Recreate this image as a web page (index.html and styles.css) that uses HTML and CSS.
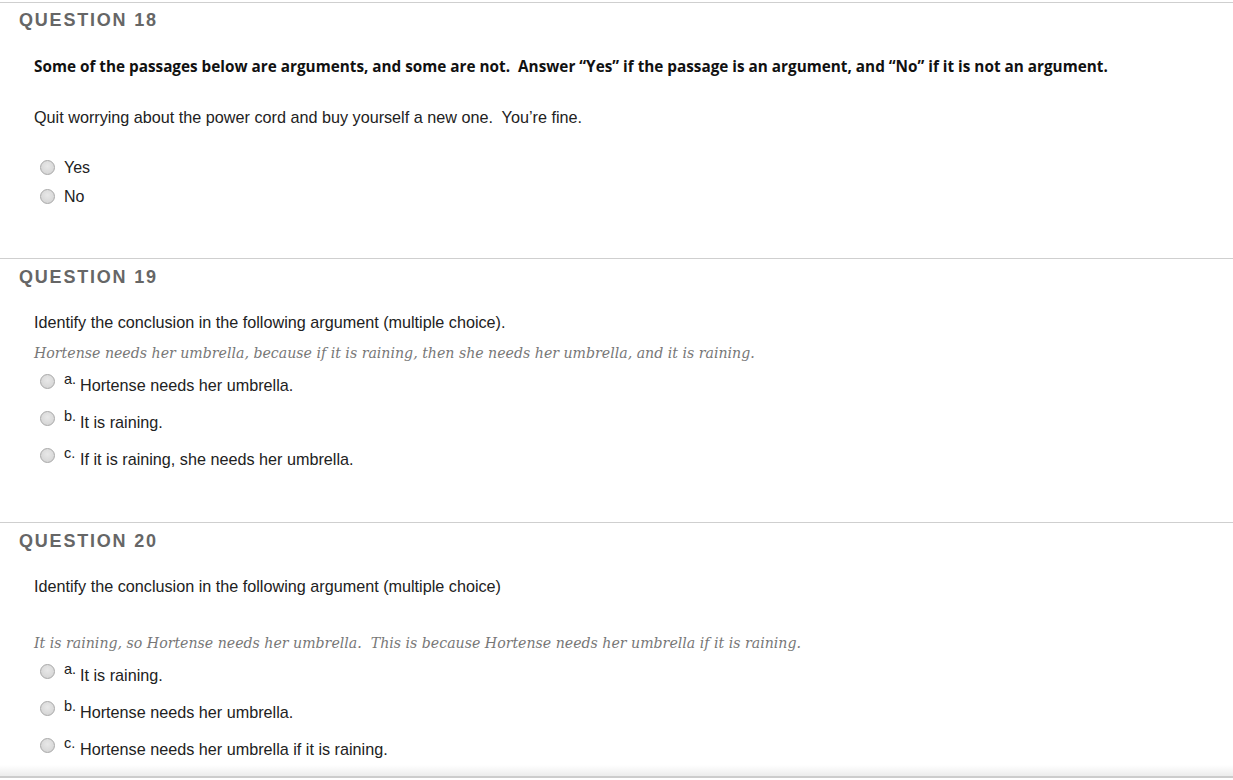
FILE: index.html
```html
<!DOCTYPE html>
<html>
<head>
<meta charset="utf-8">
<link rel="stylesheet" href="styles.css">
</head>
<body>
<div class="page">
  <section class="question q18">
    <h2 class="qtitle">QUESTION 18</h2>
    <p class="instr">Some of the passages below are arguments, and some are not.&nbsp; Answer “Yes” if the passage is an argument, and “No” if it is not an argument.</p>
    <p class="body-text passage">Quit worrying about the power cord and buy yourself a new one.&nbsp; You’re fine.</p>
    <ul class="tf">
      <li><span class="radio"></span><span class="tf-label">Yes</span></li>
      <li><span class="radio"></span><span class="tf-label">No</span></li>
    </ul>
  </section>
  <section class="question q19">
    <h2 class="qtitle">QUESTION 19</h2>
    <p class="body-text prompt">Identify the conclusion in the following argument (multiple choice).</p>
    <p class="ital">Hortense needs her umbrella, because if it is raining, then she needs her umbrella, and it is raining.</p>
    <ul class="mc">
      <li><span class="radio"></span><span class="letter">a.</span><span class="opt">Hortense needs her umbrella.</span></li>
      <li><span class="radio"></span><span class="letter">b.</span><span class="opt">It is raining.</span></li>
      <li><span class="radio"></span><span class="letter">c.</span><span class="opt">If it is raining, she needs her umbrella.</span></li>
    </ul>
  </section>
  <section class="question q20">
    <h2 class="qtitle">QUESTION 20</h2>
    <p class="body-text prompt2">Identify the conclusion in the following argument (multiple choice)</p>
    <p class="ital ital2">It is raining, so Hortense needs her umbrella.&nbsp; This is because Hortense needs her umbrella if it is raining.</p>
    <ul class="mc">
      <li><span class="radio"></span><span class="letter">a.</span><span class="opt">It is raining.</span></li>
      <li><span class="radio"></span><span class="letter">b.</span><span class="opt">Hortense needs her umbrella.</span></li>
      <li><span class="radio"></span><span class="letter">c.</span><span class="opt">Hortense needs her umbrella if it is raining.</span></li>
    </ul>
  </section>
  <div class="footer-shade"></div>
</div>
</body>
</html>
```
FILE: styles.css
```css
html, body {
  margin: 0;
  padding: 0;
  background: #fff;
}
body {
  font-family: "Liberation Sans", Arial, sans-serif;
  color: #111;
  width: 1233px;
  height: 780px;
  overflow: hidden;
}
.page {
  padding-top: 2px;
}
.question {
  border-top: 1px solid #cfcfcf;
}
.qtitle {
  margin: 0;
  padding: 7px 0 0 19px;
  height: 20px;
  line-height: 20px;
  font-size: 18px;
  font-weight: bold;
  letter-spacing: 1.8px;
  color: #666;
}
.q18 .qtitle { padding-top: 7px; }
.q19 .qtitle, .q20 .qtitle { padding-top: 8px; }
.instr {
  margin: 0;
  padding: 0 0 0 34px;
  font-family: "Open Sans", "Liberation Sans", sans-serif;
  font-weight: 700;
  font-size: 15.3px;
  line-height: 20px;
  color: #111;
}
.q18 .instr { margin-top: 26px; }
.body-text {
  margin: 0;
  padding-left: 34px;
  font-size: 16.2px;
  line-height: 20px;
  color: #222;
}
.passage { margin-top: 31px; }
.tf {
  list-style: none;
  margin: 26px 0 0 0;
  padding: 0 0 0 40px;
}
.tf li {
  display: flex;
  align-items: center;
  height: 29px;
}
.tf-label {
  font-size: 16px;
  color: #222;
  margin-left: 9px;
}
.q18 { height: 255px; }
.radio {
  display: inline-block;
  box-sizing: border-box;
  width: 15px;
  height: 15px;
  border-radius: 50%;
  border: 1px solid #a8a8a8;
  background: radial-gradient(circle at 50% 40%, #e8e8e8 0%, #dadada 60%, #cdcdcd 100%);
  flex: none;
}
.q19 { height: 263px; }
.prompt { margin-top: 25px; }
.ital {
  margin: 11px 0 0 0;
  padding-left: 34px;
  font-family: "DejaVu Serif", Georgia, serif;
  font-style: italic;
  font-size: 14.15px;
  line-height: 20px;
  color: #777;
}
.mc {
  list-style: none;
  margin: 8px 0 0 0;
  padding: 0 0 0 40px;
}
.mc li {
  display: flex;
  align-items: flex-start;
  height: 37px;
}
.mc .radio {
  margin-top: 3px;
}
.letter {
  font-size: 14.5px;
  line-height: 16px;
  color: #222;
  margin-left: 9px;
  width: 16px;
  margin-top: 0;
}
.opt {
  font-size: 16.2px;
  line-height: 20px;
  color: #222;
  margin-top: 4px;
}
.prompt2 { margin-top: 25px; }
.ital2 { margin-top: 37px; }
.q20 { height: 242px; }
.footer-shade {
  height: 11px;
  background: linear-gradient(#ffffff, #ececec);
  border-bottom: 2px solid #cccccc;
}
```
